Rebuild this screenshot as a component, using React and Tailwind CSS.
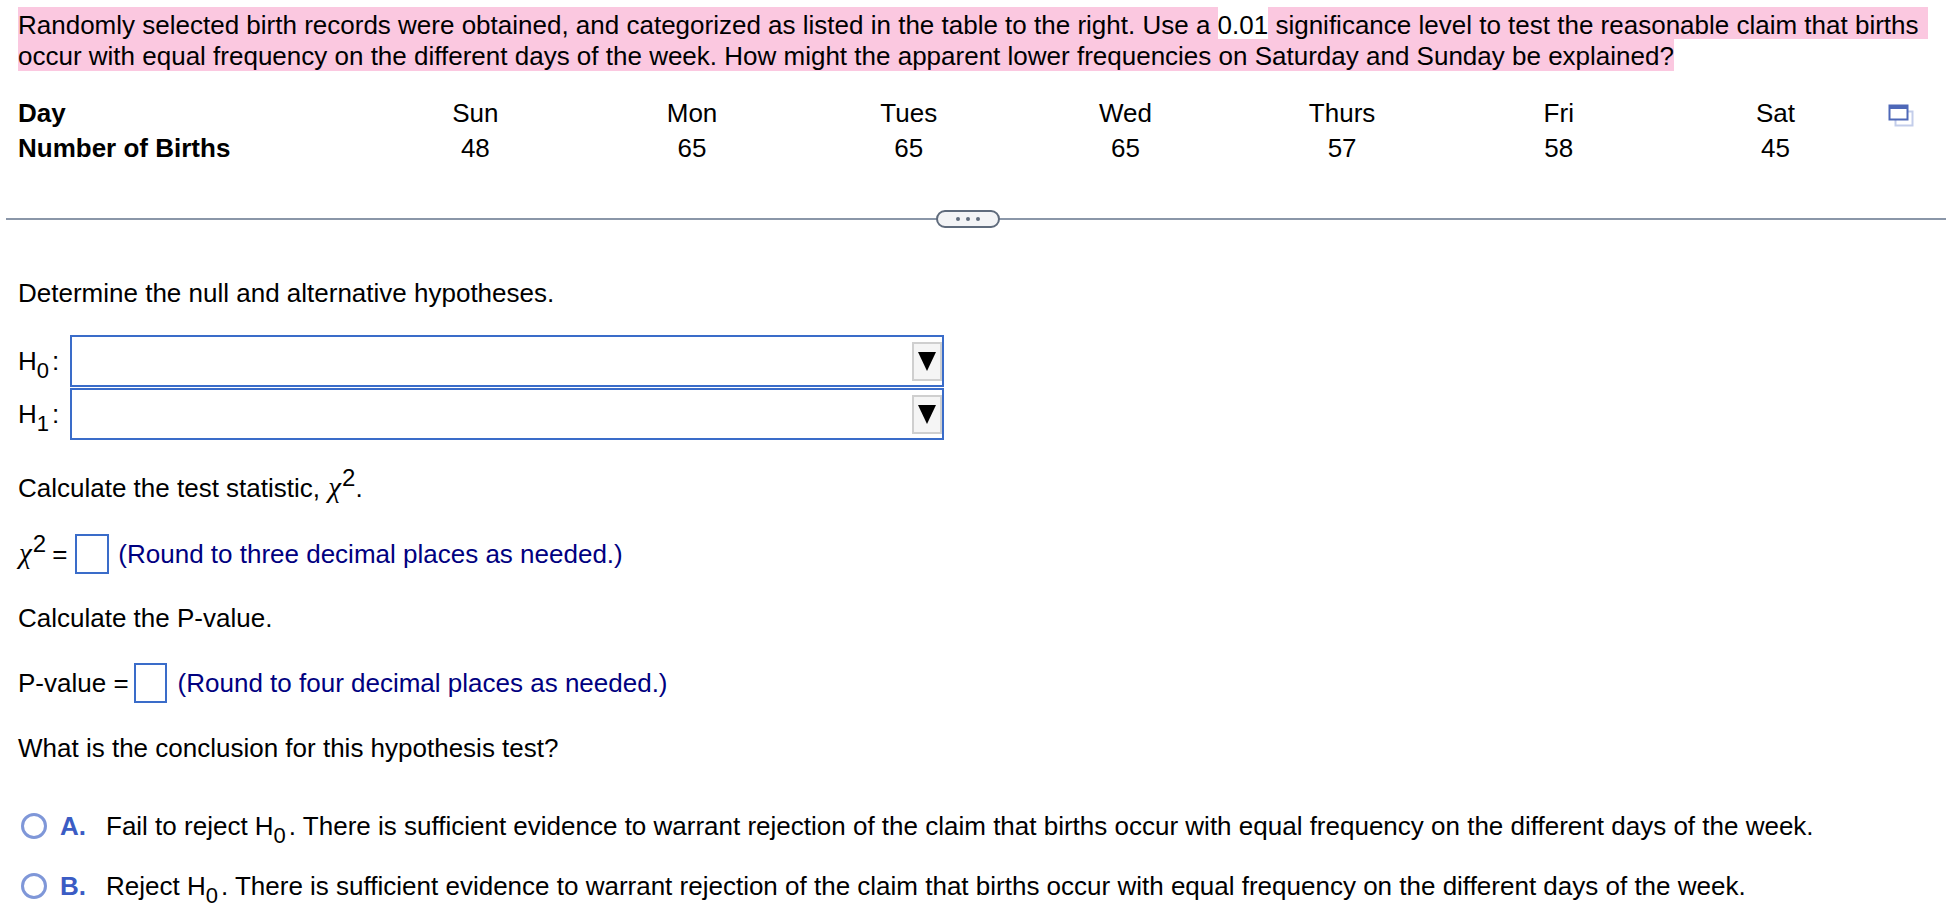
import React from 'react';

const days = ['Sun', 'Mon', 'Tues', 'Wed', 'Thurs', 'Fri', 'Sat'];
const births = [48, 65, 65, 65, 57, 58, 45];

const CopyIcon = () => (
  <svg width="28" height="24" viewBox="0 0 28 24" fill="none">
    <rect x="7.5" y="7.5" width="17" height="14" stroke="#c3cdea" strokeWidth="2" />
    <rect x="1.5" y="1.5" width="18" height="14" fill="#fff" stroke="#4e68b8" strokeWidth="2" />
    <rect x="1" y="1" width="19" height="4" fill="#4e68b8" />
  </svg>
);

const Chi = () => (
  <span className="whitespace-nowrap">
    <span className="font-['Liberation_Serif',serif] italic text-[29px] leading-none ml-[1px]">χ</span>
    <sup className="text-[24px] leading-none align-[-1px] ml-[1px]">2</sup>
  </span>
);

const Sub = ({ children }) => <sub className="text-[22px] leading-none align-[-3px] mr-[3px]">{children}</sub>;

const Dropdown = () => (
  <div className="w-[874px] h-[52px] border-2 border-[#3a6cc9] flex items-center justify-end bg-white">
    <div className="w-[30px] h-[39px] bg-[#f5f5f5] border-2 border-[#cfcfcf] flex items-center justify-center">
      <svg width="20" height="20" viewBox="0 0 20 20">
        <polygon points="1,1 19,1 10,20" fill="#000" />
      </svg>
    </div>
  </div>
);

const AnswerBox = ({ className }) => (
  <span className={`inline-block border-2 border-[#3a6cc9] bg-white ${className}`} />
);

const Choice = ({ letter, children, className }) => (
  <div className={`flex items-center h-[36px] ${className}`}>
    <span className="w-[26px] h-[26px] ml-[21px] rounded-full border-[3px] border-[#7f97d8] bg-white shrink-0" />
    <span className="w-[59px] pl-[13px] font-bold text-[#3b5cc4]">{letter}</span>
    <span className="whitespace-nowrap">{children}</span>
  </div>
);

export default function App() {
  return (
    <div className="w-[1946px] h-[912px] overflow-hidden bg-white text-black text-[26px] font-['Liberation_Sans',Arial,sans-serif]">
      {/* Question */}
      <div className="pt-[7px] pl-[18px] leading-[32px] whitespace-nowrap">
        <div className="w-fit h-[32px] pr-[9px] bg-[#fbc8e0]">
          <span className="relative top-[2px]">
            Randomly selected birth records were obtained, and categorized as listed in the table to the right. Use a{' '}
          </span>
          <span className="inline-block bg-white h-[32px]"><span className="relative top-[2px]">0.01</span></span>{' '}
          <span className="relative top-[2px]">significance level to test the reasonable claim that births</span>
        </div>
        <div className="w-fit h-[32px] bg-[#fbc8e0]">
          <span className="relative top-[1px]">
            occur with equal frequency on the different days of the week. How might the apparent lower frequencies on Saturday and Sunday be explained?
          </span>
        </div>
      </div>

      {/* Data table */}
      <div className="mt-[25px] pl-[18px] grid grid-cols-[349px_repeat(7,216.7px)_1fr] auto-rows-[35px] items-center">
        <div className="font-bold">Day</div>
        {days.map((d) => (
          <div key={d} className="text-center">{d}</div>
        ))}
        <div className="pl-[4px] pt-[5px]"><CopyIcon /></div>
        <div className="font-bold">Number of Births</div>
        {births.map((n, i) => (
          <div key={i} className="text-center">{n}</div>
        ))}
      </div>

      {/* Divider */}
      <div className="mt-[52px] ml-[6px] relative h-[2px] bg-[#8a96a8]">
        <div className="absolute left-[930px] -top-[8px] w-[64px] h-[18px] rounded-full border-2 border-[#5f6b7c] bg-[#f3f4f6] flex items-center justify-center gap-[6px]">
          <span className="w-[4px] h-[4px] rounded-full bg-[#5f6b7c]" />
          <span className="w-[4px] h-[4px] rounded-full bg-[#5f6b7c]" />
          <span className="w-[4px] h-[4px] rounded-full bg-[#5f6b7c]" />
        </div>
      </div>

      <div className="pl-[18px]">
        <div className="mt-[57px] leading-[32px]">Determine the null and alternative hypotheses.</div>

        <div className="mt-[26px] flex items-center h-[52px]">
          <span className="w-[52px] whitespace-nowrap">H<Sub>0</Sub>:</span>
          <Dropdown />
        </div>
        <div className="mt-[1px] flex items-center h-[52px]">
          <span className="w-[52px] whitespace-nowrap">H<Sub>1</Sub>:</span>
          <Dropdown />
        </div>

        <div className="mt-[32px] h-[32px] leading-[32px]">
          Calculate the test statistic, <Chi />.
        </div>

        <div className="mt-[30px] flex items-center h-[40px]">
          <Chi />
          <span className="ml-[6px]">=</span>
          <AnswerBox className="ml-[8px] w-[34px] h-[40px]" />
          <span className="ml-[9px] text-[#000080]">(Round to three decimal places as needed.)</span>
        </div>

        <div className="mt-[28px] leading-[32px]">Calculate the P-value.</div>

        <div className="mt-[29px] flex items-center h-[40px]">
          <span>P-value =</span>
          <AnswerBox className="ml-[5px] w-[33px] h-[40px]" />
          <span className="ml-[11px] text-[#000080]">(Round to four decimal places as needed.)</span>
        </div>

        <div className="mt-[29px] leading-[32px]">What is the conclusion for this hypothesis test?</div>
      </div>

      {/* Answer choices */}
      <Choice letter="A." className="mt-[44px]">
        Fail to reject H<Sub>0</Sub>. There is sufficient evidence to warrant rejection of the claim that births occur with equal frequency on the different days of the week.
      </Choice>
      <Choice letter="B." className="mt-[24px]">
        Reject H<Sub>0</Sub>. There is sufficient evidence to warrant rejection of the claim that births occur with equal frequency on the different days of the week.
      </Choice>
    </div>
  );
}
